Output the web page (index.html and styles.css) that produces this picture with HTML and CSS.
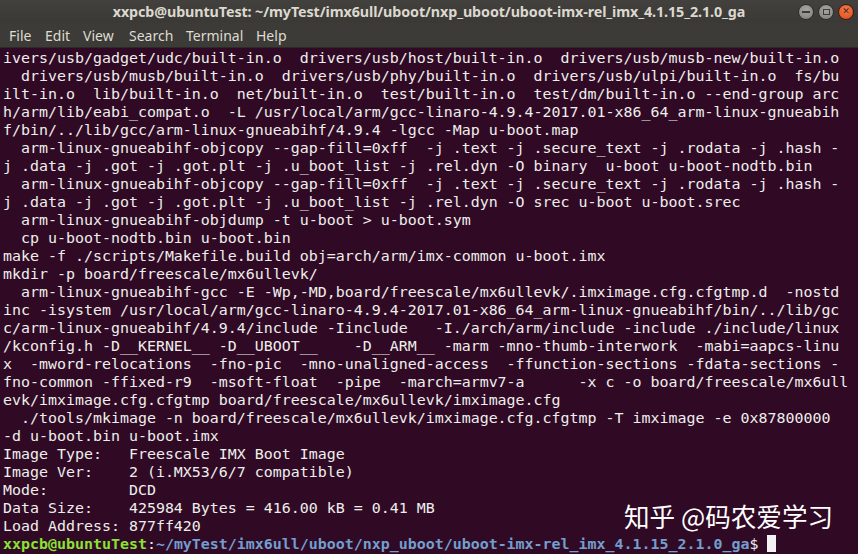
FILE: index.html
```html
<!DOCTYPE html>
<html lang="en">
<head>
<meta charset="utf-8">
<title>Terminal</title>
<link rel="stylesheet" href="styles.css">
</head>
<body>
<div class="window">
  <div class="titlebar">
    <div class="spacer"></div>
    <div class="title">xxpcb@ubuntuTest: ~/myTest/imx6ull/uboot/nxp_uboot/uboot-imx-rel_imx_4.1.15_2.1.0_ga</div>
    <div class="controls">
      <span class="btn btn-min"><span class="dash"></span></span>
      <span class="btn btn-max"><span class="box"></span></span>
      <span class="btn btn-close">&#x2715;</span>
    </div>
  </div>
  <div class="menubar">
    <span class="menu-item">File</span>
    <span class="menu-item">Edit</span>
    <span class="menu-item">View</span>
    <span class="menu-item">Search</span>
    <span class="menu-item">Terminal</span>
    <span class="menu-item">Help</span>
  </div>
  <div class="terminal">
<div class="line">ivers/usb/gadget/udc/built-in.o  drivers/usb/host/built-in.o  drivers/usb/musb-new/built-in.o</div>
<div class="line">  drivers/usb/musb/built-in.o  drivers/usb/phy/built-in.o  drivers/usb/ulpi/built-in.o  fs/bu</div>
<div class="line">ilt-in.o  lib/built-in.o  net/built-in.o  test/built-in.o  test/dm/built-in.o --end-group arc</div>
<div class="line">h/arm/lib/eabi_compat.o  -L /usr/local/arm/gcc-linaro-4.9.4-2017.01-x86_64_arm-linux-gnueabih</div>
<div class="line">f/bin/../lib/gcc/arm-linux-gnueabihf/4.9.4 -lgcc -Map u-boot.map</div>
<div class="line">  arm-linux-gnueabihf-objcopy --gap-fill=0xff  -j .text -j .secure_text -j .rodata -j .hash -</div>
<div class="line">j .data -j .got -j .got.plt -j .u_boot_list -j .rel.dyn -O binary  u-boot u-boot-nodtb.bin</div>
<div class="line">  arm-linux-gnueabihf-objcopy --gap-fill=0xff  -j .text -j .secure_text -j .rodata -j .hash -</div>
<div class="line">j .data -j .got -j .got.plt -j .u_boot_list -j .rel.dyn -O srec u-boot u-boot.srec</div>
<div class="line">  arm-linux-gnueabihf-objdump -t u-boot &gt; u-boot.sym</div>
<div class="line">  cp u-boot-nodtb.bin u-boot.bin</div>
<div class="line">make -f ./scripts/Makefile.build obj=arch/arm/imx-common u-boot.imx</div>
<div class="line">mkdir -p board/freescale/mx6ullevk/</div>
<div class="line">  arm-linux-gnueabihf-gcc -E -Wp,-MD,board/freescale/mx6ullevk/.imximage.cfg.cfgtmp.d  -nostd</div>
<div class="line">inc -isystem /usr/local/arm/gcc-linaro-4.9.4-2017.01-x86_64_arm-linux-gnueabihf/bin/../lib/gc</div>
<div class="line">c/arm-linux-gnueabihf/4.9.4/include -Iinclude   -I./arch/arm/include -include ./include/linux</div>
<div class="line">/kconfig.h -D__KERNEL__ -D__UBOOT__    -D__ARM__ -marm -mno-thumb-interwork  -mabi=aapcs-linu</div>
<div class="line">x  -mword-relocations  -fno-pic  -mno-unaligned-access  -ffunction-sections -fdata-sections -</div>
<div class="line">fno-common -ffixed-r9  -msoft-float  -pipe  -march=armv7-a      -x c -o board/freescale/mx6ull</div>
<div class="line">evk/imximage.cfg.cfgtmp board/freescale/mx6ullevk/imximage.cfg</div>
<div class="line">  ./tools/mkimage -n board/freescale/mx6ullevk/imximage.cfg.cfgtmp -T imximage -e 0x87800000</div>
<div class="line">-d u-boot.bin u-boot.imx</div>
<div class="line">Image Type:   Freescale IMX Boot Image</div>
<div class="line">Image Ver:    2 (i.MX53/6/7 compatible)</div>
<div class="line">Mode:         DCD</div>
<div class="line">Data Size:    425984 Bytes = 416.00 kB = 0.41 MB</div>
<div class="line">Load Address: 877ff420</div>
<div class="line"><span class="p-user">xxpcb@ubuntuTest</span>:<span class="p-path">~/myTest/imx6ull/uboot/nxp_uboot/uboot-imx-rel_imx_4.1.15_2.1.0_ga</span>$ <span class="cursor"> </span></div>
  </div>
  <div class="watermark">知乎 @码农爱学习</div>
</div>
</body>
</html>
```
FILE: styles.css
```css
html, body {
  margin: 0;
  padding: 0;
  background: #300a24;
  overflow: hidden;
}

.window {
  position: relative;
  width: 858px;
  height: 554px;
  display: flex;
  flex-direction: column;
  background: #300a24;
  overflow: hidden;
}

.titlebar {
  height: 23px;
  display: grid;
  grid-template-columns: 1fr auto 1fr;
  align-items: center;
  background: linear-gradient(#42413d, #3a3935);
  flex: none;
}

.title {
  font-family: "Noto Sans", "DejaVu Sans", sans-serif;
  font-weight: bold;
  font-size: 14.3px;
  color: #dcd8cf;
  white-space: nowrap;
  letter-spacing: -0.1px;
}

.controls {
  display: flex;
  justify-content: flex-end;
  gap: 4px;
  padding-right: 4px;
}

.btn {
  width: 16px;
  height: 16px;
  border-radius: 50%;
  display: flex;
  align-items: center;
  justify-content: center;
  box-sizing: border-box;
}

.btn-min, .btn-max {
  background: radial-gradient(circle at 50% 35%, #a7a69f, #7f7e79);
  border: 1px solid #2f2e2b;
}

.dash {
  width: 8px;
  height: 2px;
  background: #3c3b37;
}

.box {
  width: 7px;
  height: 6px;
  border: 1.5px solid #3c3b37;
  box-sizing: border-box;
}

.btn-close {
  background: radial-gradient(circle at 50% 35%, #f57a4c, #df4a16);
  border: 1px solid #3a1d10;
  color: #3b2a22;
  font-family: "DejaVu Sans", sans-serif;
  font-size: 9px;
  font-weight: bold;
  line-height: 1;
}

.menubar {
  height: 25px;
  flex: none;
  display: flex;
  align-items: center;
  background: #3c3b37;
  padding-left: 9px;
  font-family: "Noto Sans", "DejaVu Sans", sans-serif;
  font-size: 14px;
  color: #dfdbd2;
  border-bottom: 1px solid #2b2a27;
  box-sizing: border-box;
  gap: 0;
}

.menu-item:nth-child(1) { width: 36px; }
.menu-item:nth-child(2) { width: 38px; }
.menu-item:nth-child(3) { width: 46px; }
.menu-item:nth-child(4) { width: 57px; }
.menu-item:nth-child(5) { width: 70px; }

.terminal {
  flex: 1;
  padding: 1px 0 0 3px;
  font-family: "DejaVu Sans Mono", "Liberation Mono", monospace;
  font-size: 14.95px;
  line-height: 18px;
  color: #eeeeec;
}

.line {
  white-space: pre;
  height: 18px;
}

.p-user {
  color: #8ae234;
  font-weight: bold;
}

.p-path {
  color: #729fcf;
  font-weight: bold;
}

.cursor {
  display: inline-block;
  width: 9px;
  height: 17px;
  background: #f2f2f2;
  vertical-align: top;
}

.watermark {
  position: absolute;
  left: 624px;
  top: 499px;
  font-family: "Noto Sans CJK SC", sans-serif;
  font-size: 25.6px;
  color: #ffffff;
  white-space: pre;
  line-height: 34px;
}
```
